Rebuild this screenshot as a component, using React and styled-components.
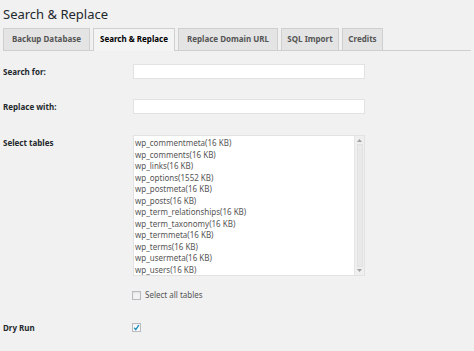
import React from 'react';
import styled, { createGlobalStyle } from 'styled-components';

const Global = createGlobalStyle`
  html, body { margin: 0; padding: 0; background: #f1f1f1; }
  body { font-family: "Noto Sans", "Open Sans", sans-serif; color: #23282d; }
  * { box-sizing: border-box; }
`;

const Wrap = styled.div`
  width: 474px;
  height: 351px;
  overflow: hidden;
  padding: 0 3px;
`;

const Title = styled.h1`
  margin: 0;
  height: 28px;
  padding-top: 5px;
  font-size: 13px;
  line-height: 18px;
  font-weight: 400;
  color: #23282d;
`;

const TabBar = styled.div`
  display: flex;
  align-items: flex-end;
  gap: 3px;
  height: 23px;
  border-bottom: 1px solid #cfcfcf;
`;

const Tab = styled.div`
  width: ${(p) => p.$w}px;
  height: ${(p) => (p.$active ? 23 : 22)}px;
  margin-bottom: ${(p) => (p.$active ? -1 : 0)}px;
  border: 1px solid #cfcfcf;
  border-bottom: none;
  background: ${(p) => (p.$active ? '#f4f4f4' : '#e4e4e4')};
  color: ${(p) => (p.$active ? '#000' : '#555')};
  font-size: 8px;
  font-weight: 700;
  line-height: 20px;
  text-align: center;
  white-space: nowrap;
`;

const Form = styled.div`
  display: flex;
  flex-direction: column;
`;

const Row = styled.div`
  display: grid;
  grid-template-columns: 130px 1fr;
  align-items: start;
  margin-top: ${(p) => p.$mt}px;
`;

const Label = styled.div`
  font-size: 8px;
  font-weight: 700;
  line-height: ${(p) => p.$lh || 15}px;
  color: #23282d;
`;

const TextInput = styled.div`
  width: 232px;
  height: 15px;
  background: #fff;
  border: 1px solid #e2e2e2;
`;

const ListBox = styled.div`
  width: 232px;
  height: 141px;
  background: #fff;
  border: 1px solid #e2e2e2;
  display: flex;
`;

const Items = styled.div`
  flex: 1;
  padding: 1px 0 0 1px;
  font-size: 8px;
  line-height: 11.5px;
  color: #555;
`;

const Item = styled.div`
  white-space: nowrap;
`;

const Scrollbar = styled.div`
  width: 10px;
  display: flex;
  flex-direction: column;
  align-items: center;
  justify-content: space-between;
  background: #efefef;
  border-left: 1px solid #e6e6e6;
  padding: 3px 0;
`;

const Arrow = styled.svg`
  width: 5px;
  height: 3px;
  display: block;
`;

const Track = styled.div`
  flex: 1;
  width: 6px;
  margin: 2px 0;
  background: #e9e9e9;
  border: 1px solid #e2e2e2;
`;

const CheckRow = styled.div`
  display: flex;
  align-items: center;
  gap: 4px;
  font-size: 8px;
  line-height: 10px;
  color: #555;
  margin-left: -1px;
`;

const Box = styled.div`
  width: 9px;
  height: 9px;
  border: 1px solid #b8bcc0;
  background: ${(p) => (p.$checked ? '#fff' : '#f3f3f3')};
  box-shadow: inset 0 1px 2px rgba(0,0,0,0.08);
  display: flex;
  align-items: center;
  justify-content: center;
`;

const tables = [
  'wp_commentmeta(16 KB)',
  'wp_comments(16 KB)',
  'wp_links(16 KB)',
  'wp_options(1552 KB)',
  'wp_postmeta(16 KB)',
  'wp_posts(16 KB)',
  'wp_term_relationships(16 KB)',
  'wp_term_taxonomy(16 KB)',
  'wp_termmeta(16 KB)',
  'wp_terms(16 KB)',
  'wp_usermeta(16 KB)',
  'wp_users(16 KB)',
];

const tabs = [
  { label: 'Backup Database', w: 87 },
  { label: 'Search & Replace', w: 82, active: true },
  { label: 'Replace Domain URL', w: 100 },
  { label: 'SQL Import', w: 58 },
  { label: 'Credits', w: 41 },
];

export default function App() {
  return (
    <>
      <Global />
      <Wrap>
        <Title>Search &amp; Replace</Title>
        <TabBar>
          {tabs.map((t) => (
            <Tab key={t.label} $w={t.w} $active={t.active}>{t.label}</Tab>
          ))}
        </TabBar>
        <Form>
          <Row $mt={13}>
            <Label>Search for:</Label>
            <TextInput />
          </Row>
          <Row $mt={20}>
            <Label>Replace with:</Label>
            <TextInput />
          </Row>
          <Row $mt={21}>
            <Label>Select tables</Label>
            <ListBox>
              <Items>
                {tables.map((t) => <Item key={t}>{t}</Item>)}
              </Items>
              <Scrollbar>
                <Arrow viewBox="0 0 5 3"><path d="M0 3 L2.5 0 L5 3 Z" fill="#a0a0a0" /></Arrow>
                <Track />
                <Arrow viewBox="0 0 5 3"><path d="M0 0 L2.5 3 L5 0 Z" fill="#a0a0a0" /></Arrow>
              </Scrollbar>
            </ListBox>
          </Row>
          <Row $mt={14}>
            <div />
            <CheckRow>
              <Box />
              <span>Select all tables</span>
            </CheckRow>
          </Row>
          <Row $mt={23}>
            <Label $lh={10}>Dry Run</Label>
            <CheckRow>
              <Box $checked>
                <svg width="7" height="7" viewBox="0 0 7 7">
                  <path d="M1.2 3.8 L2.8 5.6 L5.8 1.2" stroke="#1e8cbe" strokeWidth="1.4" fill="none" />
                </svg>
              </Box>
            </CheckRow>
          </Row>
        </Form>
      </Wrap>
    </>
  );
}
